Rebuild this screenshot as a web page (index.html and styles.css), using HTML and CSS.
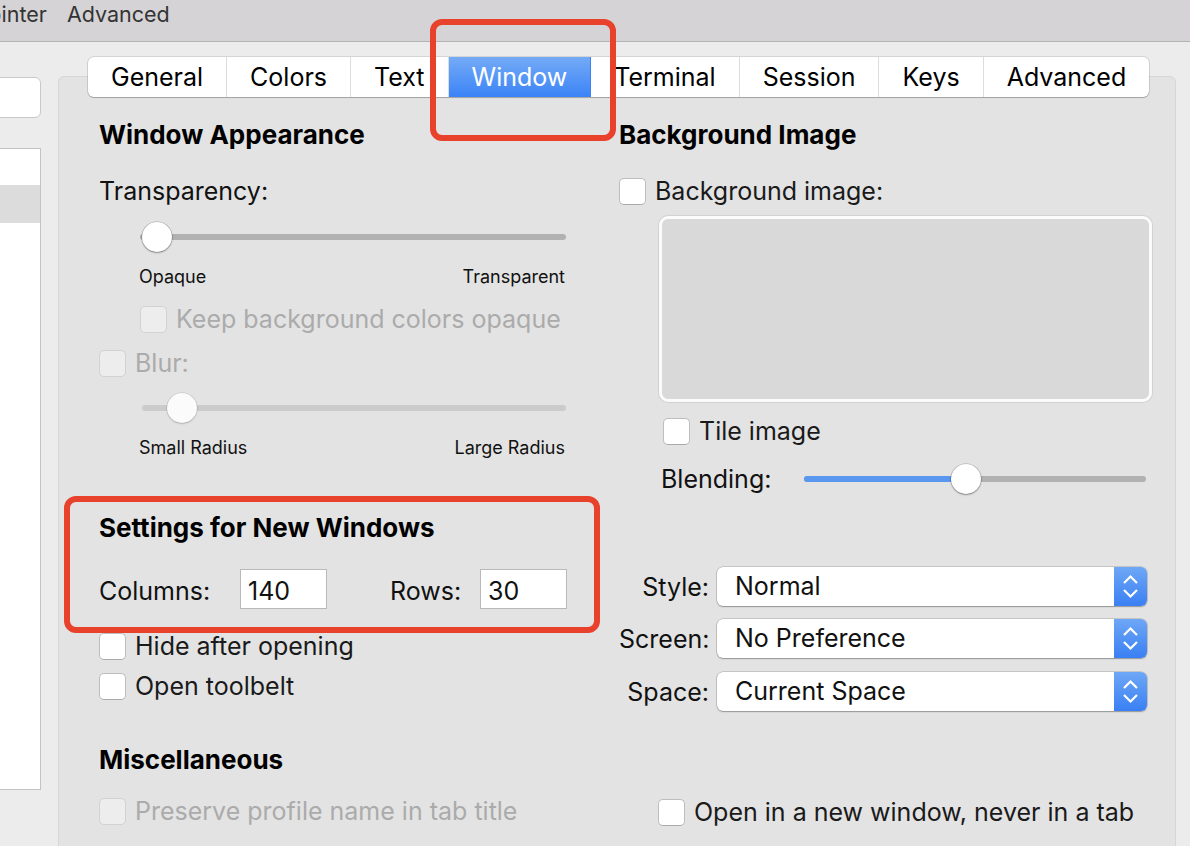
FILE: index.html
```html
<!DOCTYPE html>
<html lang="en">
<head>
    <meta charset="UTF-8">
    <meta name="viewport" content="width=device-width, initial-scale=1.0">
    <title>Profiles - Window</title>
    <link rel="stylesheet" href="styles.css">
</head>
<body>
    <div class="menubar">
        <span class="menu-item first">Pointer</span>
        <span class="menu-item">Advanced</span>
    </div>

    <div class="content">
        <aside class="sidebar">
            <div class="search"></div>
            <div class="list">
                <div class="list-row"></div>
                <div class="list-row selected"></div>
            </div>
        </aside>

        <section class="panel">
            <nav class="tabs">
                <span class="tab">General</span>
                <span class="tab">Colors</span>
                <span class="tab">Text</span>
                <span class="tab active">Window</span>
                <span class="tab">Terminal</span>
                <span class="tab">Session</span>
                <span class="tab">Keys</span>
                <span class="tab">Advanced</span>
            </nav>

            <div class="columns">
                <!-- left column -->
                <div class="col col-left">
                    <h3 class="heading">Window Appearance</h3>
                    <div class="label transparency">Transparency:</div>
                    <div class="slider slider-transparency">
                        <div class="track"></div>
                        <span class="knob" style="left: 2px"></span>
                    </div>
                    <div class="slider-labels">
                        <span>Opaque</span>
                        <span>Transparent</span>
                    </div>
                    <label class="check off keep"><span class="box"></span>Keep background colors opaque</label>
                    <label class="check off blur"><span class="box"></span>Blur:</label>
                    <div class="slider off slider-blur">
                        <div class="track"></div>
                        <span class="knob" style="left: 25px"></span>
                    </div>
                    <div class="slider-labels">
                        <span>Small Radius</span>
                        <span>Large Radius</span>
                    </div>

                    <h3 class="heading settings">Settings for New Windows</h3>
                    <div class="size-row">
                        <span class="size-label">Columns:</span>
                        <input class="field" type="text" value="140">
                        <span class="size-label rows">Rows:</span>
                        <input class="field" type="text" value="30">
                    </div>
                    <label class="check hide"><span class="box"></span>Hide after opening</label>
                    <label class="check toolbelt"><span class="box"></span>Open toolbelt</label>

                    <h3 class="heading misc">Miscellaneous</h3>
                    <label class="check off preserve"><span class="box"></span>Preserve profile name in tab title</label>
                </div>

                <!-- right column -->
                <div class="col col-right">
                    <h3 class="heading">Background Image</h3>
                    <label class="check bg"><span class="box"></span>Background image:</label>
                    <div class="well"></div>
                    <label class="check tile"><span class="box"></span>Tile image</label>
                    <div class="blend-row">
                        <span class="blend-label">Blending:</span>
                        <div class="slider slider-blend">
                            <div class="track"></div>
                            <div class="fill" style="width: 162px"></div>
                            <span class="knob" style="left: 147px"></span>
                        </div>
                    </div>

                    <div class="popup-row style">
                        <span class="popup-label">Style:</span>
                        <div class="popup"><span class="popup-value">Normal</span><span class="stepper"><svg width="33" height="39" viewBox="0 0 33 39"><path d="M10 16 L16.5 9.5 L23 16 M10 23 L16.5 29.5 L23 23" fill="none" stroke="#fff" stroke-width="2.2"/></svg></span></div>
                    </div>
                    <div class="popup-row screen">
                        <span class="popup-label">Screen:</span>
                        <div class="popup"><span class="popup-value">No Preference</span><span class="stepper"><svg width="33" height="39" viewBox="0 0 33 39"><path d="M10 16 L16.5 9.5 L23 16 M10 23 L16.5 29.5 L23 23" fill="none" stroke="#fff" stroke-width="2.2"/></svg></span></div>
                    </div>
                    <div class="popup-row space">
                        <span class="popup-label">Space:</span>
                        <div class="popup"><span class="popup-value">Current Space</span><span class="stepper"><svg width="33" height="39" viewBox="0 0 33 39"><path d="M10 16 L16.5 9.5 L23 16 M10 23 L16.5 29.5 L23 23" fill="none" stroke="#fff" stroke-width="2.2"/></svg></span></div>
                    </div>

                    <label class="check newwin"><span class="box"></span>Open in a new window, never in a tab</label>
                </div>
            </div>
        </section>
    </div>

    <!-- annotation frames -->
    <div class="mark mark-tab"></div>
    <div class="mark mark-settings"></div>
</body>
</html>
```

FILE: styles.css
```css
* {
    box-sizing: border-box;
}

body {
    margin: 0;
    width: 1190px;
    height: 846px;
    overflow: hidden;
    position: relative;
    background: #ececec;
    font-family: Inter, "Noto Sans", sans-serif;
    color: #111;
}

/* top bar */
.menubar {
    height: 42px;
    background: #d5d3d6;
    border-bottom: 1px solid #b5b3b5;
    display: flex;
    gap: 20px;
    font-size: 21.5px;
    line-height: 28px;
    color: #333;
    overflow: hidden;
}

.menu-item.first {
    margin-left: -25px;
}

.content {
    display: flex;
    padding-top: 34px;
}

/* sidebar (cut off at the left edge) */
.sidebar {
    width: 200px;
    margin-left: -159px;
    margin-right: 17px;
    flex-shrink: 0;
}

.search {
    height: 41px;
    margin-top: 1px;
    background: #fff;
    border: 1px solid #c9c9c9;
    border-radius: 6px;
}

.list {
    height: 642px;
    margin-top: 30px;
    background: #fff;
    border: 1px solid #c3c3c3;
    padding-top: 36px;
}

.list-row.selected {
    height: 38px;
    background: #dcdcdc;
}

/* main panel */
.panel {
    width: 1118px;
    height: 800px;
    background: #e3e3e3;
    border: 1px solid #d6d6d6;
    border-radius: 6px 6px 0 0;
    padding: 0 23px 0 40px;
}

.tabs {
    display: flex;
    width: fit-content;
    height: 40px;
    margin: -20px 0 0 -11px;
    background: #fff;
    border-radius: 6px;
    overflow: hidden;
    box-shadow: 0 0 0 1px rgba(0, 0, 0, 0.1), 0 1px 1px rgba(0, 0, 0, 0.2);
}

.tab {
    padding: 0 23px;
    font-size: 25px;
    line-height: 40px;
    color: #000;
    border-right: 1px solid #dcdcdc;
    white-space: nowrap;
}

.tab:last-child {
    border-right: none;
}

.tab.active {
    background: linear-gradient(#74abf7, #3b83f6);
    color: #fff;
    border-right-color: #3b83f6;
}

.columns {
    display: flex;
    gap: 52px;
}

.col-left {
    width: 468px;
}

.col-right {
    width: 533px;
}

.heading {
    margin: 23px 0 0;
    font-size: 26px;
    font-weight: 700;
    line-height: 30px;
    color: #000;
    white-space: nowrap;
}

.label {
    font-size: 25px;
    line-height: 30px;
}

.transparency {
    margin-top: 26px;
}

/* sliders */
.slider {
    position: relative;
    height: 32px;
}

.track {
    position: absolute;
    left: 0;
    right: 0;
    top: 13px;
    height: 6px;
    border-radius: 3px;
    background: #b1b1b1;
}

.fill {
    position: absolute;
    left: 0;
    top: 13px;
    height: 6px;
    border-radius: 3px;
    background: #5a98ef;
}

.knob {
    position: absolute;
    top: 1px;
    width: 30px;
    height: 30px;
    border-radius: 50%;
    background: #fff;
    box-shadow: 0 0 0 0.5px rgba(0, 0, 0, 0.25), 0 1px 2px rgba(0, 0, 0, 0.3);
}

.slider.off .track {
    background: #cbcbcb;
}

.slider.off .knob {
    background: #fbfbfb;
    box-shadow: 0 0 0 0.5px rgba(0, 0, 0, 0.15), 0 1px 2px rgba(0, 0, 0, 0.15);
}

.slider-transparency {
    margin: 15px 0 0 41px;
    width: 426px;
}

.slider-blur {
    margin: 14px 0 0 43px;
    width: 424px;
}

.slider-labels {
    display: flex;
    justify-content: space-between;
    width: 426px;
    margin: 14px 0 0 40px;
    font-size: 18px;
    line-height: 20px;
    color: #111;
}

/* checkboxes */
.check {
    display: flex;
    align-items: center;
    gap: 9px;
    height: 30px;
    font-size: 25px;
    color: #1a1a1a;
    white-space: nowrap;
}

.box {
    width: 27px;
    height: 27px;
    flex-shrink: 0;
    background: #fff;
    border: 1px solid #bdbdbd;
    border-bottom-color: #a9a9a9;
    border-radius: 5px;
}

.check.off {
    color: #ababab;
}

.check.off .box {
    background: #ededed;
    border-color: #d2d2d2;
}

.keep {
    margin: 17px 0 0 41px;
}

.blur {
    margin-top: 14px;
}

.settings {
    margin-top: 55px;
}

.size-row {
    display: flex;
    align-items: center;
    height: 40px;
    margin-top: 26px;
    font-size: 25px;
}

.size-label {
    width: 141px;
    padding-top: 4px;
}

.size-label.rows {
    width: 90px;
    margin-left: 63px;
}

.field {
    width: 87px;
    height: 40px;
    border: 1px solid #b9b9b9;
    background: #fff;
    padding: 4px 0 0 7px;
    font-family: inherit;
    font-size: 25px;
    color: #111;
    outline: none;
}

.hide {
    margin-top: 22px;
}

.toolbelt {
    margin-top: 10px;
}

.misc {
    margin-top: 44px;
}

.preserve {
    margin-top: 21px;
}

/* right column */
.bg {
    margin-top: 26px;
}

.well {
    width: 493px;
    height: 186px;
    margin: 10px 0 0 40px;
    background: #d9d9d9;
    border: 3px solid #fbfbfb;
    border-radius: 9px;
    box-shadow: 0 0 0 1px #d2d2d2;
}

.tile {
    margin: 14px 0 0 44px;
}

.blend-row {
    display: flex;
    align-items: center;
    margin: 17px 0 0 42px;
}

.blend-label {
    width: 143px;
    font-size: 25px;
}

.slider-blend {
    width: 342px;
}

.popup-row {
    display: flex;
    align-items: center;
    gap: 8px;
    font-size: 25px;
}

.popup-row.style {
    margin-top: 72px;
}

.popup-row.screen {
    margin-top: 13px;
}

.popup-row.space {
    margin-top: 14px;
}

.popup-label {
    width: 90px;
    text-align: right;
    white-space: nowrap;
}

.popup {
    display: flex;
    width: 430px;
    height: 39px;
    background: #fff;
    border-radius: 6px;
    box-shadow: 0 0 0 0.5px rgba(0, 0, 0, 0.25), 0 1px 1.5px rgba(0, 0, 0, 0.25);
    overflow: hidden;
}

.popup-value {
    flex: 1;
    padding-left: 18px;
    line-height: 39px;
    font-size: 25px;
    color: #111;
}

.stepper {
    width: 33px;
    height: 39px;
    background: linear-gradient(#6ea7f6, #3a80f4);
}

.stepper svg {
    display: block;
}

.newwin {
    margin: 86px 0 0 39px;
}

/* red annotation frames */
.mark {
    position: absolute;
    border: 6px solid #e8412c;
    border-radius: 12px;
}

.mark-tab {
    left: 430px;
    top: 19px;
    width: 186px;
    height: 122px;
}

.mark-settings {
    left: 64px;
    top: 496px;
    width: 536px;
    height: 137px;
}
```
